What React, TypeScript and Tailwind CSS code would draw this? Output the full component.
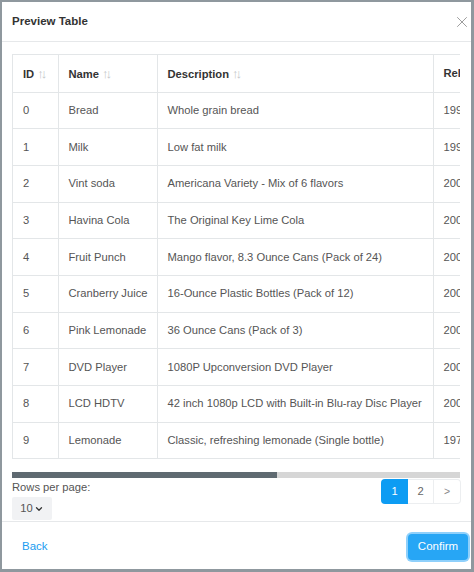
import { X, ChevronDown } from "lucide-react"

const rows = [
  { id: 0, name: "Bread", description: "Whole grain bread", release: "1992-01-01" },
  { id: 1, name: "Milk", description: "Low fat milk", release: "1995-10-01" },
  { id: 2, name: "Vint soda", description: "Americana Variety - Mix of 6 flavors", release: "2005-10-01" },
  { id: 3, name: "Havina Cola", description: "The Original Key Lime Cola", release: "2005-10-01" },
  { id: 4, name: "Fruit Punch", description: "Mango flavor, 8.3 Ounce Cans (Pack of 24)", release: "2003-01-05" },
  { id: 5, name: "Cranberry Juice", description: "16-Ounce Plastic Bottles (Pack of 12)", release: "2006-08-04" },
  { id: 6, name: "Pink Lemonade", description: "36 Ounce Cans (Pack of 3)", release: "2006-11-05" },
  { id: 7, name: "DVD Player", description: "1080P Upconversion DVD Player", release: "2006-11-15" },
  { id: 8, name: "LCD HDTV", description: "42 inch 1080p LCD with Built-in Blu-ray Disc Player", release: "2008-05-08" },
  { id: 9, name: "Lemonade", description: "Classic, refreshing lemonade (Single bottle)", release: "1970-01-01" },
]

function SortHeader({ label, last }: { label: string; last?: boolean }) {
  return (
    <th className={`h-[37px] border-b border-[#e3e6e8] ${last ? "" : "border-r"} whitespace-nowrap px-[10px] text-left align-middle font-bold leading-none text-[#333]`}>
      <span>{label}</span>
      {!last && <span className="ml-[3px] text-[13px] font-normal leading-none tracking-[-3px] text-[#c3c7ca]">↑↓</span>}
    </th>
  )
}

export default function App() {
  return (
    <div className="h-[572px] w-[474px] bg-[#8f989e] pb-[3px] pl-[2px] pr-[3px] pt-[2px] font-['Liberation_Sans',Arial,sans-serif]">
      <div className="flex h-full flex-col bg-white">
        {/* Header */}
        <div className="flex h-[40px] items-center justify-between border-b border-[#e6e8ea] pl-[10px]">
          <h2 className="text-[11.5px] font-bold text-[#333]">Preview Table</h2>
          <X className="h-[18px] w-[18px] text-[#9a9a9a]" strokeWidth={1.3} />
        </div>

        {/* Body */}
        <div className="flex flex-1 flex-col px-[10px] pt-[12px]">
          <div className="w-[448px] overflow-hidden border-l border-t border-[#e3e6e8]">
            <table className="w-[560px] table-fixed border-collapse text-[11.2px] text-[#555]">
              <colgroup>
                <col className="w-[45px]" />
                <col className="w-[99px]" />
                <col className="w-[276px]" />
                <col className="w-[140px]" />
              </colgroup>
              <thead>
                <tr>
                  <SortHeader label="ID" />
                  <SortHeader label="Name" />
                  <SortHeader label="Description" />
                  <SortHeader label="Release date" last />
                </tr>
              </thead>
              <tbody>
                {rows.map((r) => (
                  <tr key={r.id} className="h-[36.7px]">
                    <td className="border-b border-r border-[#e3e6e8] px-[10px]">{r.id}</td>
                    <td className="whitespace-nowrap border-b border-r border-[#e3e6e8] px-[10px]">{r.name}</td>
                    <td className="whitespace-nowrap border-b border-r border-[#e3e6e8] px-[10px]">{r.description}</td>
                    <td className="whitespace-nowrap border-b border-[#e3e6e8] px-[10px]">{r.release}</td>
                  </tr>
                ))}
              </tbody>
            </table>
          </div>

          {/* Scrollbar */}
          <div className="mt-[13px] flex h-[6px] w-[448px] bg-[#d6d6d6]">
            <div className="h-full w-[265px] bg-[#5f6a71]" />
          </div>

          {/* Pagination */}
          <div className="flex items-start justify-between">
            <div className="pt-[2px]">
              <div className="text-[11.2px] leading-[14px] text-[#555]">Rows per page:</div>
              <div className="mt-[3px] flex h-[23px] w-[40px] items-center justify-center gap-[1px] rounded-[2px] bg-[#f1f2f4] text-[11.2px] text-[#555]">
                10
                <ChevronDown className="h-[10px] w-[10px] text-[#333]" strokeWidth={3} />
              </div>
            </div>
            <div className="mt-[1px] flex text-[11.2px]">
              <button className="flex h-[25px] w-[27px] items-center justify-center rounded-l-[4px] bg-[#0d9cf3] text-white">1</button>
              <button className="flex h-[25px] w-[26px] items-center justify-center border border-l-0 border-[#eceef0] bg-white text-[#666]">2</button>
              <button className="flex h-[25px] w-[27px] items-center justify-center rounded-r-[4px] border border-l-0 border-[#eceef0] bg-white text-[10.5px] text-[#888]">&gt;</button>
            </div>
          </div>
        </div>

        {/* Footer */}
        <div className="flex h-[48px] items-center justify-between border-t border-[#e6e8ea] pl-[20px] pr-[3px] pt-[3px]">
          <button className="text-[11.5px] text-[#1a9cf0]">Back</button>
          <button className="h-[26px] w-[60px] rounded-[4px] bg-[#27a6f5] text-[11.5px] text-white ring-2 ring-[#8fd0fb]">Confirm</button>
        </div>
      </div>
    </div>
  )
}
